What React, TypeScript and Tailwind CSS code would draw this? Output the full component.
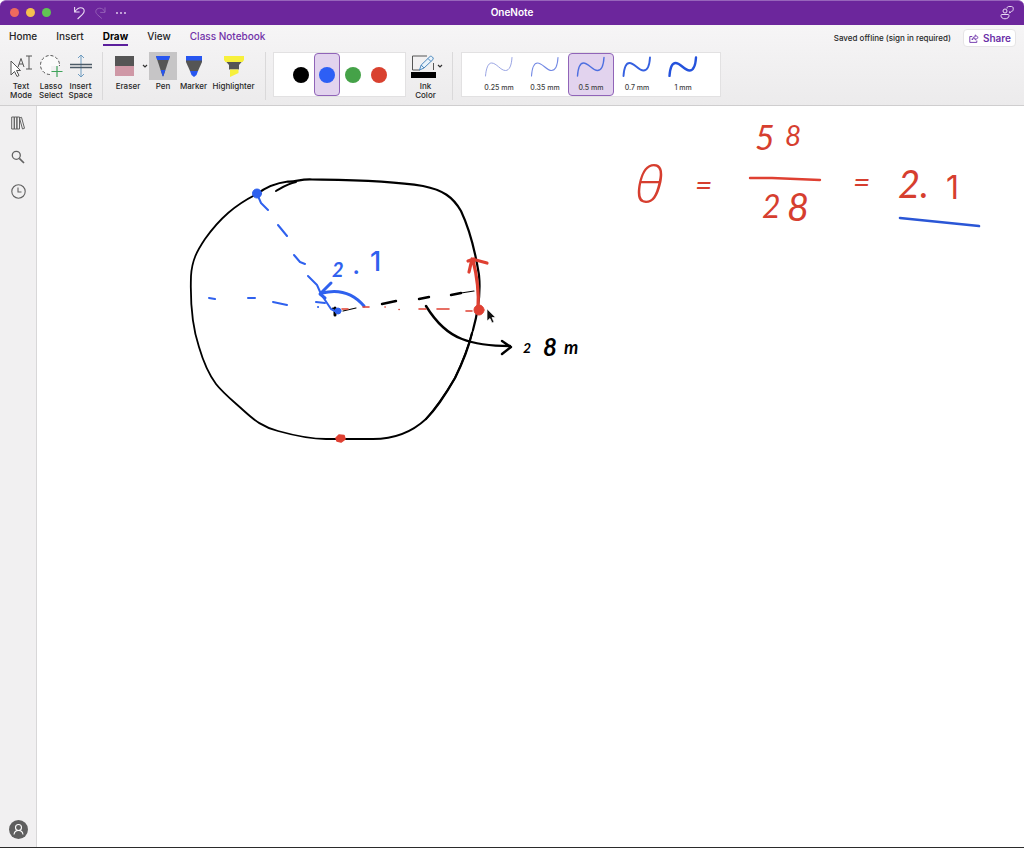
import React, { useState } from 'react';

const pens = [
  { label: 'Black', dot: 'bg-black' },
  { label: 'Blue', dot: 'bg-[#2d5ff5]' },
  { label: 'Green', dot: 'bg-[#45a248]' },
  { label: 'Red', dot: 'bg-[#d9412f]' },
];

const sizes = [
  { label: '0.25 mm', width: 0.9, color: '#8f9be0' },
  { label: '0.35 mm', width: 1.1, color: '#7389e4' },
  { label: '0.5 mm', width: 1.4, color: '#4d6fe0' },
  { label: '0.7 mm', width: 1.9, color: '#3560e0' },
  { label: '1 mm', width: 2.4, color: '#2452dc' },
];

const tabs = ['Home', 'Insert', 'Draw', 'View', 'Class Notebook'];

interface ToolProps {
  label: React.ReactNode;
  className: string;
  active?: boolean;
  children: React.ReactNode;
}

const Tool: React.FC<ToolProps> = ({ label, className, active, children }) => (
  <button type="button" className={`flex shrink-0 flex-col items-center text-[8px] leading-[9px] font-medium text-[#262626] ${className}`}>
    <span className={`mb-0.5 flex h-7 w-7 items-center justify-center ${active ? 'bg-[#c6c5c6]' : ''}`}>{children}</span>
    {label}
  </button>
);

const Chevron = () => (
  <svg width="6" height="5" viewBox="0 0 6 5" fill="none" stroke="#333" strokeWidth="1.2">
    <path d="M1 1l2 2 2-2" />
  </svg>
);

const Divider = () => <div className="h-12 w-px shrink-0 bg-[#dad9da]" />;

const TitleBar = () => (
  <header className="flex h-[25px] items-center rounded-t-md border-t border-[#9765bb] bg-[#6c269c] px-2.5 pb-px text-white">
    <div className="flex flex-1 items-center">
      <div className="flex gap-[7px]">
        <button type="button" aria-label="Close" className="h-[9px] w-[9px] rounded-full bg-[#ed6a5e]" />
        <button type="button" aria-label="Minimize" className="h-[9px] w-[9px] rounded-full bg-[#f5bf4f]" />
        <button type="button" aria-label="Zoom" className="h-[9px] w-[9px] rounded-full bg-[#61c454]" />
      </div>
      <div className="ml-[22px] flex items-center gap-2">
        <button type="button" aria-label="Undo">
          <svg width="13" height="14" viewBox="0 0 13 14" fill="none" stroke="#eadcf3" strokeWidth="1.1">
            <path d="M1.6 1v5h5M1.8 5.8C3.4 3.6 5.2 1.8 7.6 1.8c2.2 0 3.6 1.4 3.6 3.3 0 1.6-1 2.6-2 3.5L4.6 13" />
          </svg>
        </button>
        <button type="button" aria-label="Redo">
          <svg width="13" height="14" viewBox="0 0 13 14" fill="none" stroke="#9360b6" strokeWidth="1">
            <path d="M11 1.4v5H6.2M11 6C9.8 3.6 8 2.2 5.8 2.2 3.4 2.2 1.8 3.6 1.8 5.5c0 1.6 1 2.6 2 3.5l4 3.5" />
          </svg>
        </button>
        <button type="button" aria-label="More">
          <svg width="12" height="4" viewBox="0 0 12 4" fill="#eadcf3">
            <circle cx="2" cy="2" r=".9" />
            <circle cx="6" cy="2" r=".9" />
            <circle cx="10" cy="2" r=".9" />
          </svg>
        </button>
      </div>
    </div>
    <h1 className="text-[10px] font-semibold">OneNote</h1>
    <div className="flex flex-1 justify-end">
      <button type="button" aria-label="Feedback">
        <svg width="14" height="15" viewBox="0 0 14 15" fill="none" stroke="#eadcf3" strokeWidth="1">
          <circle cx="5" cy="6" r="2" />
          <path d="M2 9.5h6c.7 0 1 .3 1 1 0 2-1.500 3.300-4 3.300s-4-1.300-4-3.300c0-.7.3-1 1-1zM7 3.500c0-1.300.6-2 1.700-2h2.600c1.200 0 1.900.7 1.900 1.700v1.400c0 1-.6 1.600-1.600 1.700L9.700 8V6.300" />
        </svg>
      </button>
    </div>
  </header>
);

const TabRow = () => {
  const [current, setCurrent] = useState('Draw');

  return (
    <nav className="flex h-[26px] items-start justify-between pr-2 pl-[9px]">
      <div className="flex gap-[19px] pt-[3px] text-[10px] text-[#262626]">
        {tabs.map((tab) => (
          <button
            key={tab}
            type="button"
            onClick={() => setCurrent(tab)}
            className={`h-[18px] border-b-2 leading-4 whitespace-nowrap ${
              tab === current ? 'border-[#5b1f9c] font-bold text-black' : 'border-transparent font-medium'
            } ${tab === 'Class Notebook' ? 'text-[#7131a8]' : ''}`}
          >
            {tab}
          </button>
        ))}
      </div>
      <div className="flex items-center gap-3 pt-1">
        <span className="text-[8px] font-medium whitespace-nowrap text-[#262626]">Saved offline (sign in required)</span>
        <button type="button" className="flex h-[18px] items-center gap-1 rounded-sm border border-[#e6e5e6] bg-white px-1 pl-[5px] text-[10px] font-semibold text-[#6b2fa8]">
          <svg width="10" height="9" viewBox="0 0 10 9" fill="none" stroke="currentColor" strokeWidth=".9">
            <path d="M3.300 2.500H.8v5.900h7V6.500M3 6C3.200 3.800 4.400 2.900 6.200 2.800V.9l3 2.600-3 2.500V4.300C4.900 4.300 3.900 4.800 3 6z" />
          </svg>
          Share
        </button>
      </div>
    </nav>
  );
};

const Ribbon = () => {
  const [pen, setPen] = useState('Blue');
  const [size, setSize] = useState('0.5 mm');

  return (
    <div className="flex h-[55px] items-start overflow-hidden border-b border-[#cfcecf] pt-px pl-1.5">
      <Tool label={<>Text<br />Mode</>} className="w-[30px]">
        <svg width="24" height="26" viewBox="0 0 24 26" fill="none" stroke="#555" strokeWidth="1">
          <path d="M2 8v14l3.500-3.500 2.500 5 2-1-2.500-5h4z" fill="#fff" />
          <path d="M9 14l3-8.500 3 8.500M10 11h4M17 3h6M20 3v13M17 16h6" />
        </svg>
      </Tool>
      <Tool label={<>Lasso<br />Select</>} className="w-[30px]">
        <svg width="26" height="26" viewBox="0 0 26 26" fill="none">
          <circle cx="12" cy="12" r="9.500" fill="#fafafa" stroke="#555" strokeDasharray="3 2" />
          <path d="M13 13h12v12H13z" fill="#f1f0f1" />
          <path d="M19 13v11M13.500 18.500h11" stroke="#3fa35b" strokeWidth="1.200" />
        </svg>
      </Tool>
      <Tool label={<>Insert<br />Space</>} className="w-[29px]">
        <svg width="22" height="26" viewBox="0 0 22 26" fill="none">
          <path d="M11 2v22M8 5l3-3 3 3M8 21l3 3 3-3" stroke="#6f9cc0" />
          <path d="M0 11.500h22M0 14.500h22" stroke="#4c5a66" strokeWidth="1.300" />
        </svg>
      </Tool>
      <div className="w-[7px] shrink-0" />
      <Divider />
      <Tool label="Eraser" className="ml-[11px] w-7">
        <span className="-ml-2 block h-5 w-[19px] border-b-[10px] border-[#cf98a6] bg-[#555]" />
      </Tool>
      <button type="button" aria-label="Eraser options" className="mt-3 w-1.5 shrink-0">
        <Chevron />
      </button>
      <Tool label="Pen" active className="w-[30px]">
        <svg width="16" height="21" viewBox="0 0 16 21">
          <path d="M1 0h14L8.500 20h-1z" fill="#555" />
          <path d="M1 0h14l-1.200 4H2.200zM5.700 14h4.600L8 21z" fill="#2756f0" />
        </svg>
      </Tool>
      <Tool label="Marker" className="w-[31px]">
        <svg width="16" height="21" viewBox="0 0 16 21">
          <path d="M0 0h16v6l-4 9H4L0 6z" fill="#555" />
          <path d="M0 0h16v4.500H0zM4 15h8l-1.500 4L8 21l-2.500-2z" fill="#2756f0" />
        </svg>
      </Tool>
      <Tool label="Highlighter" className="w-[49px]">
        <svg width="20" height="21" viewBox="0 0 20 21">
          <path d="M1.500 5h17l-3.500 4v4.500H5V9z" fill="#555" />
          <path d="M0 0h20v4l-1.500 2h-17L0 4zM6 13.500h8.500V17L6 21z" fill="#f7f03c" />
        </svg>
      </Tool>
      <div className="w-[7px] shrink-0" />
      <Divider />

      <div className="ml-[7px] flex h-[45px] w-[133px] shrink-0 justify-center border border-[#e2e1e2] bg-white">
        {pens.map((p) => (
          <button
            key={p.label}
            type="button"
            aria-label={p.label}
            onClick={() => setPen(p.label)}
            className={`flex w-[26px] items-center justify-center rounded-sm border ${
              p.label === pen ? 'border-[#9064b8] bg-[#e2d3ee]' : 'border-transparent'
            }`}
          >
            <span className={`h-4 w-4 shrink-0 rounded-full ${p.dot}`} />
          </button>
        ))}
      </div>

      <Tool label={<>Ink<br />Color</>} className="ml-1 w-[31px]">
        <svg width="32" height="26" viewBox="0 0 32 26" fill="none" className="shrink-0">
          <path d="M17 3H2.500v14H10M23.500 10v7" stroke="#555" />
          <path d="M9.500 17l1.700-5L20 3.500c1.200-1.200 4.200 1.500 3 3L14 15z" fill="#e8f2fa" stroke="#4b87bd" />
          <path d="M18 5.500l3 3M11.200 12l2.800 3" stroke="#4b87bd" />
          <path d="M1 19h25v6H1z" fill="#000" />
        </svg>
      </Tool>
      <button type="button" aria-label="Ink color options" className="mt-3 -ml-1 w-3 shrink-0">
        <Chevron />
      </button>
      <div className="w-[3px] shrink-0" />
      <Divider />

      <div className="ml-2 flex h-[45px] w-[260px] shrink-0 justify-center border border-[#e2e1e2] bg-white">
        {sizes.map((s) => (
          <button
            key={s.label}
            type="button"
            onClick={() => setSize(s.label)}
            className={`flex w-[46px] shrink-0 flex-col items-center rounded-sm border pt-px text-[7px] leading-[9px] font-medium text-[#444] ${
              s.label === size ? 'border-[#9064b8] bg-[#e2d3ee]' : 'border-transparent'
            }`}
          >
            <svg width="30" height="22" viewBox="0 0 30 22" fill="none" stroke={s.color} strokeWidth={s.width} strokeLinecap="round" className="mb-1.5">
              <path d="M1.500 21C2 14 4 8 7.500 8c5 0 9 7.500 14 7.500 4 0 6-5 6.500-13" />
            </svg>
            {s.label}
          </button>
        ))}
      </div>
    </div>
  );
};

const Sidebar = () => (
  <aside className="flex w-[37px] shrink-0 flex-col items-center border-r border-[#d8d7d8] bg-[#f1f0f1] pt-2.5 pb-2">
    <div className="flex flex-1 flex-col gap-5">
      <button type="button" aria-label="Notebooks">
        <svg width="14" height="14" viewBox="0 0 14 14" fill="none" stroke="#626262" strokeWidth="1">
          <path d="M.7 1h2.600v12H.7zM3.300 1h2.600v12H3.300zM5.900 1h2.600v12H5.900zM8.500 2l2-.7 3 11-2 .7z" />
        </svg>
      </button>
      <button type="button" aria-label="Search">
        <svg width="14" height="14" viewBox="0 0 14 14" fill="none" stroke="#626262">
          <circle cx="5.300" cy="5.300" r="4" strokeWidth="1.300" />
          <path d="M8.300 8.300l4.700 4.700" strokeWidth="1.700" />
        </svg>
      </button>
      <button type="button" aria-label="Recent notes">
        <svg width="15" height="15" viewBox="0 0 15 15" fill="none" stroke="#626262" strokeWidth="1.100">
          <circle cx="7.500" cy="7.500" r="6.700" />
          <path d="M7 3.500V8h3.500" />
        </svg>
      </button>
    </div>
    <button type="button" aria-label="Account">
      <svg width="19" height="19" viewBox="0 0 19 19" fill="none" stroke="#fff" strokeWidth="1.100">
        <circle cx="9.500" cy="9.500" r="9.500" fill="#5f5f5f" stroke="none" />
        <circle cx="9.500" cy="7.500" r="3" />
        <path d="M5 14.500c.3-2.500 2-4 4.500-4s4.200 1.500 4.500 4" />
      </svg>
    </button>
  </aside>
);

// ink page, coordinates run in window space
const InkPage = () => (
  <svg viewBox="37 106 987 741" preserveAspectRatio="xMinYMin meet" className="w-full" fill="none" strokeLinecap="round" strokeLinejoin="round">
    {/* circle */}
    <g stroke="#000">
      <path
        strokeWidth="1.800"
        d="M257 194C235 205 220 218 205 239C197 251 192 260 191 276C190 306 194 332 199 347C204 364 210 376 216 384C223 393 233 401 243 410C255 421 263 427 278 431C296 436 309 439 326 439H373C393 439 411 433 426 419C436 408 446 393 455 378C463 361 469 345 473 330"
      />
      <path strokeWidth="2.200" d="M473 330C478 312 481 295 479 275C475 250 469 228 461 211C453 197 443 190 423 186C386 180 340 180 312 179.500C300 179 296 182 288 181.500C276 183 266 187 257 194M472 333C468 350 463 362 455 378C446 394 437 408 426 419" />
      <path strokeWidth="2" d="M276 191C283 187 287 184 296 182" />
      <path strokeWidth="2.400" d="M382 304L396 301M419 299L429 297M451 295L461 293" />
      <path strokeWidth="1.200" d="M461 293L474 291M343 311L356 308" />
      <path strokeWidth="2.400" d="M426 306C434 319 446 333 462 339C477 345 494 346 510 346M502 341L511 347L502 354" />
      <path strokeWidth="3" d="M335 308V315M333 309L338 312" />
    </g>

    {/* angle */}
    <g stroke="#2f61ee" strokeWidth="2">
      <path d="M258 196L261 203L268 210M278 225L287 236M294 255L300 262L305 264M308 276L317 285L321 294L331 309L337 312" />
      <path d="M209 298L215 299M248 298L255 298M273 302L287 305M316 302L325 303M318 307h.1" />
      <path strokeWidth="3" d="M364 306C353 293 338 289 322 293M331 283L320 294L325 298" />
      <circle cx="257" cy="193.500" r="4.500" fill="#2f61ee" strokeWidth="1" />
      <circle cx="338" cy="311" r="3" fill="#2f61ee" strokeWidth="1" />
      <path stroke="#2a56d6" strokeWidth="2.600" d="M900 218L979 226" />
    </g>

    {/* radius and velocity */}
    <g stroke="#df4032" strokeWidth="1.600">
      <path d="M342 309H348M363 307L369 307M385 307h.2M399 309.500h.2M419 309L426 309M437 309L449 309M466 311L472 311" />
      <path strokeWidth="3.200" d="M478 308C479 293 477 276 473 260M469 272L472 259L487 263M468 261L474 259" />
      <circle cx="479" cy="310" r="5" fill="#df4032" strokeWidth="1" />
      <path fill="#df4032" d="M336 438L339 435L344 435.500L345 439L341 442L337 441Z" />
      <path strokeWidth="2.400" d="M750 178L772 178L820 180" />
    </g>

    <g stroke="none" fontFamily="Lato, 'Liberation Sans', sans-serif" fontStyle="italic">
      <g fill="#d63e2f">
        <text x="635" y="203" fontSize="52" fontWeight="300" fontFamily="'Open Sans', 'DejaVu Sans', sans-serif">θ</text>
        <text x="695" y="196" fontSize="30">=</text>
        <text x="755" y="150" fontSize="34">5</text>
        <text x="785" y="146" fontSize="28">8</text>
        <text x="762" y="218" fontSize="32">2</text>
        <text x="787" y="221" fontSize="38">8</text>
        <text x="853" y="193" fontSize="30">=</text>
        <text x="898" y="198" fontSize="38">2.</text>
        <text x="946" y="199" fontSize="32" fontStyle="normal" fontFamily="Inter, sans-serif">1</text>
      </g>
      <g fill="#2f61ee">
        <text x="332" y="277" fontSize="20" fontWeight="700">2</text>
        <text x="354" y="274" fontSize="24" fontWeight="700">.</text>
        <text x="370" y="271" fontSize="27" fontStyle="normal" fontWeight="500" fontFamily="Inter, sans-serif">1</text>
      </g>
      <g fill="#000" fontWeight="700">
        <text x="523" y="353" fontSize="14">2</text>
        <text x="543" y="356" fontSize="24">8</text>
        <text x="564" y="354" fontSize="18">m</text>
      </g>
    </g>

    {/* pointer */}
    <path d="M487 309V321L490 318.500L492 323L494 322L492 317.500H495.500Z" fill="#111" stroke="#fff" strokeWidth=".7" />
  </svg>
);

const App: React.FC = () => (
  <div className="flex min-h-screen flex-col border-b border-[#2b2b2b] bg-white font-['Inter','Liberation_Sans',sans-serif]">
    <TitleBar />
    <div className="bg-linear-to-b from-[#f6f5f6] to-[#ecebec]">
      <TabRow />
      <Ribbon />
    </div>
    <div className="flex flex-1">
      <Sidebar />
      <main className="min-w-0 flex-1">
        <InkPage />
      </main>
    </div>
  </div>
);

export default App;
